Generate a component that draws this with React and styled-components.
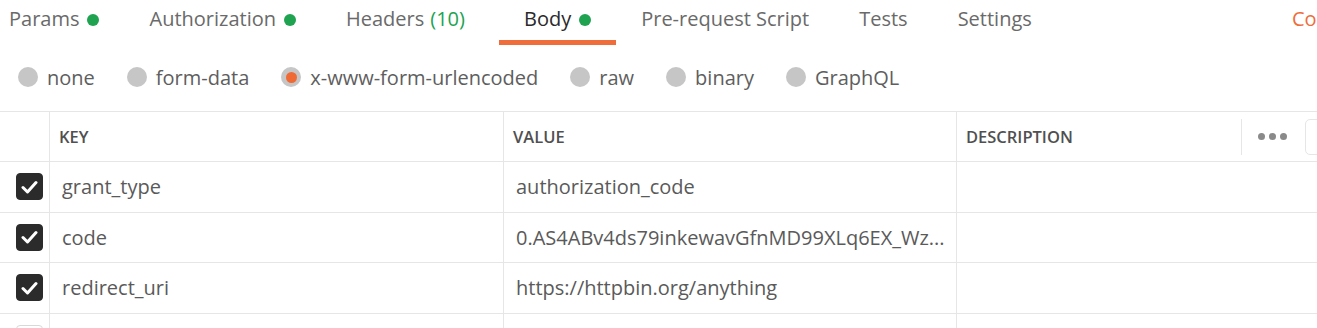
import React from 'react'
import styled, {createGlobalStyle} from 'styled-components'

const GlobalStyle = createGlobalStyle`
	html, body {
		margin: 0;
		padding: 0;
		background: #ffffff;
		overflow: hidden;
	}
	body {
		font-family: 'Open Sans', 'Liberation Sans', sans-serif;
		color: #505050;
	}
`

const tabs = [
	{label: 'Params', dot: true},
	{label: 'Authorization', dot: true},
	{label: 'Headers', count: 10},
	{label: 'Body', dot: true, active: true},
	{label: 'Pre-request Script'},
	{label: 'Tests'},
	{label: 'Settings'},
]

const bodyTypes = [
	{label: 'none'},
	{label: 'form-data'},
	{label: 'x-www-form-urlencoded', selected: true},
	{label: 'raw'},
	{label: 'binary'},
	{label: 'GraphQL'},
]

const rows = [
	{key: 'grant_type', value: 'authorization_code', checked: true},
	{key: 'code', value: '0.AS4ABv4ds79inkewavGfnMD99XLq6EX_Wz...', checked: true},
	{key: 'redirect_uri', value: 'https://httpbin.org/anything', checked: true},
	{key: '', value: '', checked: false},
]

function Check(){
	return(
		<svg width="17" height="14" viewBox="0 0 17 14">
			<path d="M2 7.5 L6.5 12 L15 2.5" fill="none" stroke="#ffffff" strokeWidth="3" strokeLinecap="round" strokeLinejoin="round"/>
		</svg>
	)
}

export default function App(){
	return(
		<>
			<GlobalStyle/>
			<Page>
				<TabBar>
					{tabs.map((t, i)=>
						<Tab key={t.label} active={t.active} first={i === 0}>
							{t.label}
							{t.dot ? <Dot/> : null}
							{t.count ? <Count>({t.count})</Count> : null}
						</Tab>
					)}
					<Cookies>Cookies</Cookies>
				</TabBar>

				<RadioRow>
					{bodyTypes.map((b)=>
						<RadioItem key={b.label}>
							<Radio selected={b.selected}/>
							{b.label}
						</RadioItem>
					)}
				</RadioRow>

				<Table>
					<HeaderRow>
						<Cell/>
						<HeadCell>KEY</HeadCell>
						<HeadCell>VALUE</HeadCell>
						<DescHead>
							<DescLabel>DESCRIPTION</DescLabel>
							<ActionDivider/>
							<MoreButton>
								<span/><span/><span/>
							</MoreButton>
							<BulkEdit>Bulk Edit</BulkEdit>
						</DescHead>
					</HeaderRow>
					{rows.map((r, i)=>
						<Row key={i}>
							<CheckCell>
								<Checkbox checked={r.checked}>{r.checked ? <Check/> : null}</Checkbox>
							</CheckCell>
							<TextCell>{r.key}</TextCell>
							<TextCell>{r.value}</TextCell>
							<TextCell last/>
						</Row>
					)}
				</Table>
			</Page>
		</>
	)
}

const Page = styled.div`
	width: 1420px;
`

const TabBar = styled.div`
	display: flex;
	height: 45px;
	padding-right: 55px;
`

const Tab = styled.div`
	box-sizing: border-box;
	height: 45px;
	display: flex;
	align-items: flex-start;
	padding: 4px 25px 0 ${p => p.first ? '9px' : '25px'};
	font-size: 20px;
	line-height: 30px;
	color: ${p => p.active ? '#2a2a2a' : '#6a6a6a'};
	border-bottom: 5px solid ${p => p.active ? '#ee6d3a' : 'transparent'};
	white-space: nowrap;
`

const Dot = styled.span`
	width: 12px;
	height: 12px;
	border-radius: 50%;
	background: #20a350;
	margin: 10px 0 0 8px;
`

const Count = styled.span`
	color: #20a350;
	margin: 0 9px 0 6px;
`

const Cookies = styled.div`
	margin-left: auto;
	padding-top: 4px;
	font-size: 20px;
	line-height: 30px;
	color: #ee6d3a;
`

const RadioRow = styled.div`
	box-sizing: border-box;
	display: flex;
	align-items: center;
	height: 66px;
	padding: 0 0 2px 18px;
`

const RadioItem = styled.div`
	display: flex;
	align-items: center;
	gap: 9px;
	margin-right: 32px;
	font-size: 20px;
	color: #5e5e5e;
`

const Radio = styled.span`
	box-sizing: border-box;
	width: 20px;
	height: 20px;
	border-radius: 50%;
	background: #c6c6c6;
	display: flex;
	align-items: center;
	justify-content: center;

	&::after{
		content: '';
		display: ${p => p.selected ? 'block' : 'none'};
		width: 11px;
		height: 11px;
		border-radius: 50%;
		background: #f06a35;
	}
`

const Table = styled.div`
	border-top: 1px solid #e6e6e6;
`

const Row = styled.div`
	display: grid;
	grid-template-columns: 50px 454px 453px 1fr;
	height: 50.5px;
	box-sizing: border-box;
	border-bottom: 1px solid #e6e6e6;
`

const HeaderRow = styled(Row)`
	height: 50px;
`

const Cell = styled.div`
	border-right: 1px solid #e6e6e6;
`

const HeadCell = styled.div`
	display: flex;
	align-items: center;
	padding-left: 9px;
	border-right: 1px solid #e6e6e6;
	font-size: 16.5px;
	font-weight: 600;
	color: #505050;
`

const DescHead = styled.div`
	display: flex;
	align-items: center;
	padding-left: 9px;
`

const DescLabel = styled.div`
	width: 275px;
	font-size: 16.5px;
	font-weight: 600;
	color: #505050;
`

const ActionDivider = styled.div`
	width: 1px;
	height: 36px;
	background: #e6e6e6;
`

const MoreButton = styled.div`
	width: 60px;
	display: flex;
	justify-content: center;
	gap: 4px;
	padding-right: 3px;

	span{
		width: 7px;
		height: 7px;
		border-radius: 50%;
		background: #8a8a8a;
	}
`

const BulkEdit = styled.div`
	height: 34px;
	padding: 0 14px;
	display: flex;
	align-items: center;
	border: 1px solid #e6e6e6;
	border-radius: 5px;
	font-size: 16px;
	color: #505050;
`

const CheckCell = styled.div`
	display: flex;
	align-items: center;
	padding-left: 16px;
	border-right: 1px solid #e6e6e6;
`

const Checkbox = styled.div`
	box-sizing: border-box;
	width: 27px;
	height: 27px;
	border-radius: 4px;
	background: ${p => p.checked ? '#2b2b2b' : '#ffffff'};
	border: 1px solid ${p => p.checked ? '#2b2b2b' : '#d8d8d8'};
	display: flex;
	align-items: center;
	justify-content: center;
`

const TextCell = styled.div`
	display: flex;
	align-items: center;
	padding: 0 14px 0 12px;
	border-right: ${p => p.last ? 'none' : '1px solid #e6e6e6'};
	font-size: 20px;
	color: #5a5a5a;
	white-space: nowrap;
	overflow: hidden;
	text-overflow: ellipsis;
`
